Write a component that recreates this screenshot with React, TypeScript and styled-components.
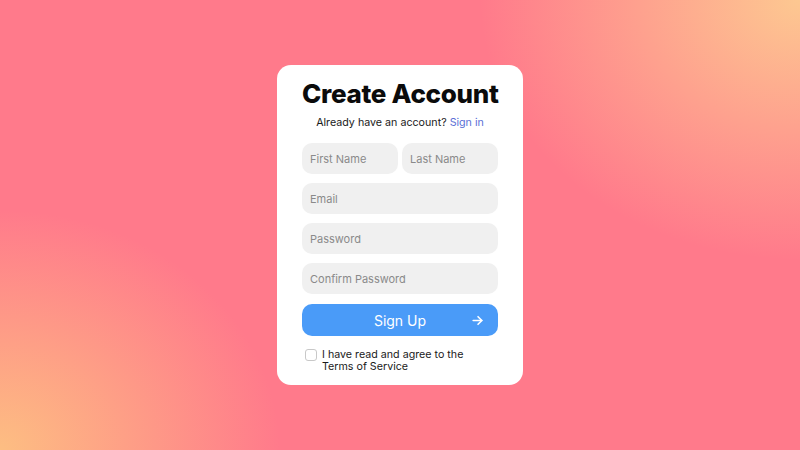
import * as React from 'react'
import styled, {createGlobalStyle} from 'styled-components'

const GlobalStyle = createGlobalStyle`
  html, body {
    margin: 0;
    padding: 0;
    height: 100%;
  }

  *, *:before, *:after {
    box-sizing: border-box;
  }

  body {
    font-family: Inter, "Noto Sans", sans-serif;
  }

  #root {
    height: 100%;
  }
`

const Page = styled.main`
  width: 800px;
  height: 450px;
  display: flex;
  align-items: center;
  justify-content: center;
  background:
    radial-gradient(ellipse 320px 260px at 100% 0%, rgba(253, 200, 145, 1), rgba(253, 200, 145, 0)),
    radial-gradient(ellipse 280px 240px at 0% 100%, rgba(253, 190, 130, 1), rgba(253, 190, 130, 0)),
    #ff7a8b;
`

const Card = styled.form`
  width: 246px;
  background: #fff;
  border-radius: 14px;
  padding: 14px 25px 12px;
  display: flex;
  flex-direction: column;
`

const Title = styled.h1`
  margin: 0;
  text-align: center;
  white-space: nowrap;
  font-size: 26px;
  font-weight: 800;
  letter-spacing: -0.3px;
  color: #0b0b0b;
  line-height: 30px;
`

const Subtitle = styled.p`
  margin: 7px 0 0;
  text-align: center;
  font-size: 10.7px;
  color: #1a1a1a;
  line-height: 14px;
`

const SignInLink = styled.a`
  color: #5a6fd6;
  text-decoration: none;
`

const Fields = styled.div`
  margin-top: 13px;
  display: flex;
  flex-direction: column;
  gap: 9px;
`

const Row = styled.div`
  display: flex;
  gap: 4px;
`

const Input = styled.input`
  width: 100%;
  min-width: 0;
  height: 31px;
  border: none;
  border-radius: 10px;
  background: #f0f0f0;
  padding: 0 8px;
  font-family: inherit;
  font-size: 11px;
  color: #333;
  outline: none;

  &::placeholder {
    color: #8a8a8a;
  }
`

const SubmitButton = styled.button`
  margin-top: 10px;
  height: 32px;
  flex-shrink: 0;
  border: none;
  border-radius: 10px;
  background: #4a9bf8;
  color: #fff;
  font-family: inherit;
  font-size: 14px;
  display: grid;
  grid-template-columns: 1fr auto 1fr;
  align-items: center;
  padding: 0 14px;
`

const ButtonLabel = styled.span`
  grid-column: 2;
`

const ArrowWrap = styled.span`
  grid-column: 3;
  justify-self: end;
  display: flex;
`

const Agree = styled.label`
  margin-top: 13px;
  display: flex;
  align-items: flex-start;
  gap: 5px;
  padding-left: 3px;
  font-size: 10.7px;
  line-height: 12px;
  color: #1a1a1a;
`

const Box = styled.span`
  width: 12px;
  height: 12px;
  border: 1px solid #c8c8c8;
  border-radius: 3px;
  flex-shrink: 0;
`

const Lines = styled.span`
  display: flex;
  flex-direction: column;
`

const Arrow = () => (
  <svg width="13" height="13" viewBox="0 0 24 24" fill="none" stroke="#fff" strokeWidth="3" strokeLinecap="round" strokeLinejoin="round">
    <path d="M4 12h16" />
    <path d="M13 5l7 7-7 7" />
  </svg>
)

export default function App() {
  return (
    <>
      <GlobalStyle />
      <Page>
        <Card onSubmit={e => e.preventDefault()}>
          <Title>Create Account</Title>
          <Subtitle>
            Already have an account? <SignInLink href="#">Sign in</SignInLink>
          </Subtitle>
          <Fields>
            <Row>
              <Input placeholder="First Name" />
              <Input placeholder="Last Name" />
            </Row>
            <Input placeholder="Email" />
            <Input type="password" placeholder="Password" />
            <Input type="password" placeholder="Confirm Password" />
          </Fields>
          <SubmitButton type="submit">
            <ButtonLabel>Sign Up</ButtonLabel>
            <ArrowWrap>
              <Arrow />
            </ArrowWrap>
          </SubmitButton>
          <Agree>
            <Box />
            <Lines>
              <span>I have read and agree to the</span>
              <span>Terms of Service</span>
            </Lines>
          </Agree>
        </Card>
      </Page>
    </>
  )
}
